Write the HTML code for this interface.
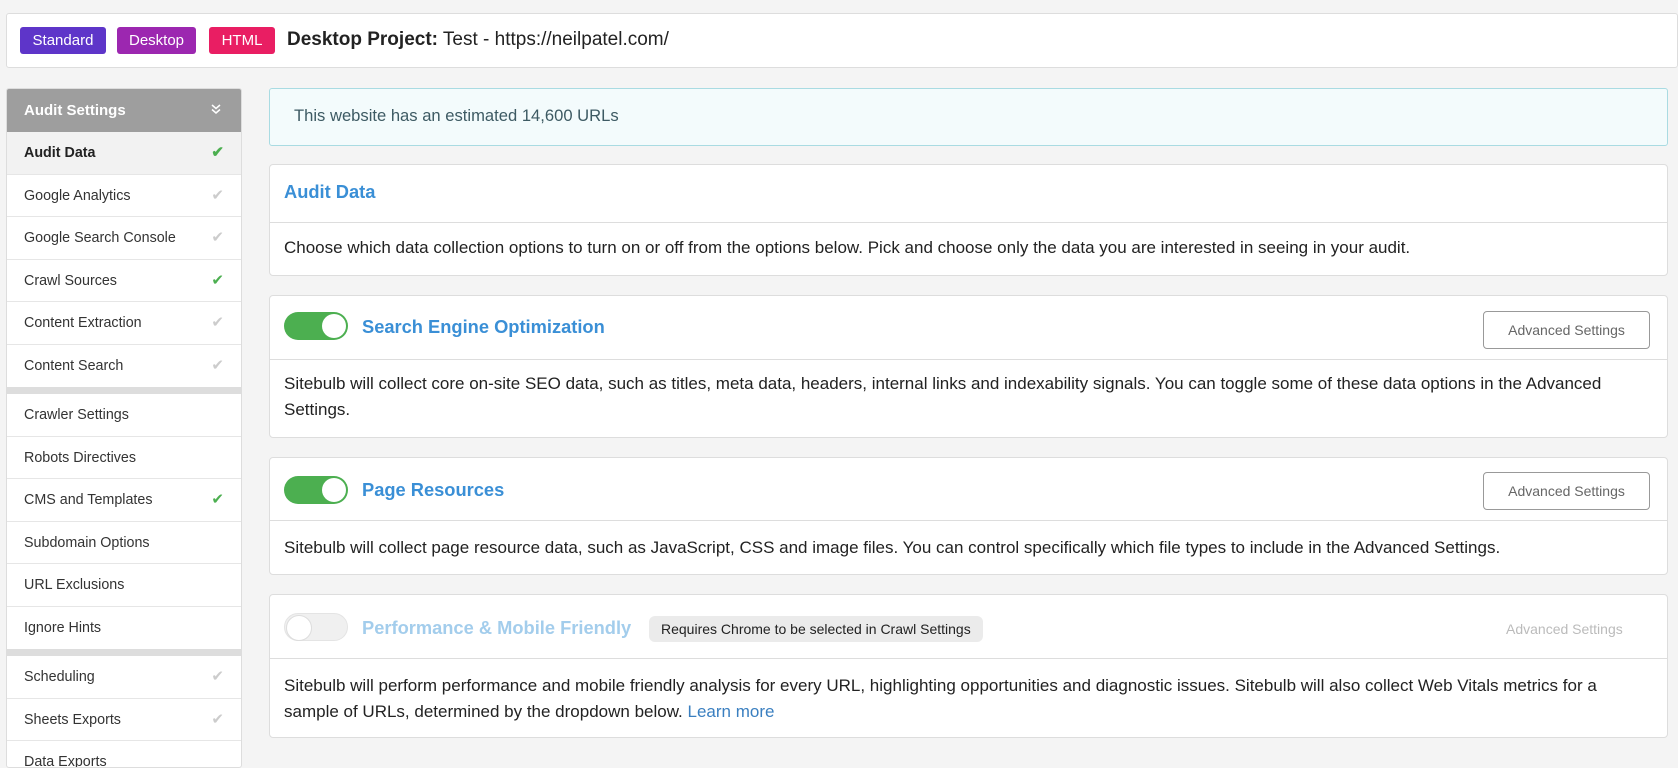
<!DOCTYPE html>
<html><head><meta charset="utf-8"><style>
*{box-sizing:border-box;margin:0;padding:0}
body{width:1678px;height:757px;overflow:hidden;background:#f4f4f4;font-family:"Liberation Sans",sans-serif;color:#222;position:relative}
.abs{position:absolute}
.hdr{left:6px;top:13px;width:1672px;height:55px;background:#fff;border:1px solid #ddd;border-radius:3px}
.badge{position:absolute;top:27px;height:27px;color:#fff;font-size:15px;line-height:27px;text-align:center;border-radius:3px}
.side{left:6px;top:88px;width:236px;height:680px;background:#fff;border:1px solid #ddd;border-radius:3px;overflow:hidden}
.sh{height:43px;background:#9e9e9e;color:#fff;font-weight:bold;font-size:15px;line-height:43px;padding-left:17px;position:relative}
.it{height:42.5px;border-bottom:1px solid #e6e6e6;font-size:14.3px;line-height:42px;padding-left:17px;position:relative;color:#333}
.it .c{position:absolute;right:17px;top:0;font-size:15px;color:#ccc}
.it .g{color:#4caf50}
.bar{height:7px;background:#ddd}
.card{position:absolute;left:269px;width:1399px;background:#fff;border:1px solid #ddd;border-radius:4px}
.card .div{position:absolute;left:0;right:0;height:1px;background:#ddd}
.ttl{position:absolute;color:#3a8fd6;font-weight:bold;font-size:18.3px}
.txt{position:absolute;left:14px;font-size:17px;line-height:26px;color:#222;width:1360px}
.tg{position:absolute;left:14px;width:64px;height:28px;border-radius:14px;background:#4caf50}
.tg::after{content:"";position:absolute;right:2px;top:2px;width:24px;height:24px;border-radius:50%;background:#fff}
.tg.off{background:#f0f0f0;border:1px solid #e4e4e4}
.tg.off::after{left:1px;right:auto;top:1px;border:1px solid #ddd}
.btn{position:absolute;left:1213px;width:167px;height:38px;border:1px solid #999;border-radius:4px;font-size:14px;color:#666;line-height:36px;text-align:center}
</style></head><body>
<div class="abs hdr"></div>
<div class="badge" style="left:20px;width:86px;background:#5e35c9">Standard</div>
<div class="badge" style="left:117px;width:79px;background:#9c27b0">Desktop</div>
<div class="badge" style="left:209px;width:66px;background:#e91e63">HTML</div>
<div class="abs" style="left:287px;top:29px;font-size:19px;color:#222"><b>Desktop Project:</b> Test - https://neilpatel.com/</div>

<div class="abs side">
<div class="sh">Audit Settings<svg style="position:absolute;right:20px;top:14px" width="10" height="12" viewBox="0 0 10 12"><path d="M1 2l4 3.5 4-3.5M1 6.5l4 3.5 4-3.5" fill="none" stroke="#fff" stroke-width="1.5"/></svg></div>
<div class="it" style="background:#f2f2f2;font-weight:bold;color:#222">Audit Data<span class="c g">✔</span></div>
<div class="it">Google Analytics<span class="c">✔</span></div>
<div class="it">Google Search Console<span class="c">✔</span></div>
<div class="it">Crawl Sources<span class="c g">✔</span></div>
<div class="it">Content Extraction<span class="c">✔</span></div>
<div class="it" style="border:0">Content Search<span class="c">✔</span></div>
<div class="bar"></div>
<div class="it">Crawler Settings</div>
<div class="it">Robots Directives</div>
<div class="it">CMS and Templates<span class="c g">✔</span></div>
<div class="it">Subdomain Options</div>
<div class="it">URL Exclusions</div>
<div class="it" style="border:0">Ignore Hints</div>
<div class="bar"></div>
<div class="it">Scheduling<span class="c">✔</span></div>
<div class="it">Sheets Exports<span class="c">✔</span></div>
<div class="it">Data Exports</div>
</div>

<div class="abs" style="left:269px;top:88px;width:1399px;height:58px;background:#f3fbfc;border:1px solid #a9dbe2;border-radius:3px;font-size:16.6px;color:#3d5a63;padding:17px 0 0 24px">This website has an estimated 14,600 URLs</div>

<div class="card" style="top:164px;height:112px">
<div class="ttl" style="left:14px;top:16px">Audit Data</div>
<div class="div" style="top:57px"></div>
<div class="txt" style="top:70px">Choose which data collection options to turn on or off from the options below. Pick and choose only the data you are interested in seeing in your audit.</div>
</div>

<div class="card" style="top:295px;height:143px">
<div class="tg" style="top:16px"></div>
<div class="ttl" style="left:92px;top:20px">Search Engine Optimization</div>
<div class="btn" style="top:15px">Advanced Settings</div>
<div class="div" style="top:63px"></div>
<div class="txt" style="top:75px">Sitebulb will collect core on-site SEO data, such as titles, meta data, headers, internal links and indexability signals. You can toggle some of these data options in the Advanced Settings.</div>
</div>

<div class="card" style="top:457px;height:118px">
<div class="tg" style="top:18px"></div>
<div class="ttl" style="left:92px;top:21px">Page Resources</div>
<div class="btn" style="top:14px">Advanced Settings</div>
<div class="div" style="top:62px"></div>
<div class="txt" style="top:77px">Sitebulb will collect page resource data, such as JavaScript, CSS and image files. You can control specifically which file types to include in the Advanced Settings.</div>
</div>

<div class="card" style="top:594px;height:144px">
<div class="tg off" style="top:18px"></div>
<div class="ttl" style="left:92px;top:22px;color:#a3cdec">Performance &amp; Mobile Friendly</div>
<div class="abs" style="left:379px;top:21px;height:26px;padding:0 12px;background:#ebebeb;border-radius:6px;font-size:14px;line-height:26px;color:#222">Requires Chrome to be selected in Crawl Settings</div>
<div class="abs" style="left:1236px;top:26px;font-size:14px;color:#bbb">Advanced Settings</div>
<div class="div" style="top:63px"></div>
<div class="txt" style="top:78px">Sitebulb will perform performance and mobile friendly analysis for every URL, highlighting opportunities and diagnostic issues. Sitebulb will also collect Web Vitals metrics for a sample of URLs, determined by the dropdown below. <span style="color:#3a7fc0">Learn more</span></div>
</div>
</body></html>
